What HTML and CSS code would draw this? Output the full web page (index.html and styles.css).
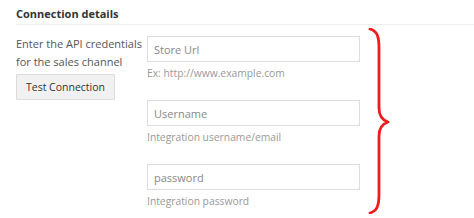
FILE: index.html
```html
<!DOCTYPE html>
<html>
  <head>
    <title>Connection details</title>
    <link rel="stylesheet" href="styles.css">
  </head>
  <body>
    <h2 class="section-title">Connection details</h2>

    <div class="section-row">
      <div class="section-intro">
        <p class="intro-text">Enter the API credentials for the sales channel</p>
        <button class="test-button">Test Connection</button>
      </div>

      <div class="fields">
        <div class="field">
          <input class="field-input" type="text" placeholder="Store Url">
          <div class="field-hint">Ex: http://www.example.com</div>
        </div>
        <div class="field">
          <input class="field-input" type="text" placeholder="Username">
          <div class="field-hint">Integration username/email</div>
        </div>
        <div class="field">
          <input class="field-input" type="password" placeholder="password">
          <div class="field-hint">Integration password</div>
        </div>
      </div>

      <svg class="brace" viewBox="0 0 24 186" xmlns="http://www.w3.org/2000/svg">
        <path
          d="M2 1C9 3 11 8 11 20V80C11 88 14 92 20 94C14 96 11 100 11 108V166C11 178 9 183 2 185"
        />
      </svg>
    </div>
  </body>
</html>
```

FILE: styles.css
```css
body {
  margin: 0;
  padding: 0 0 0 16px;
  font-family: "Open Sans", "Liberation Sans", Arial, sans-serif;
  background-color: #ffffff;
  color: #444444;
}
.section-title {
  margin: 0;
  padding: 5px 0 1px;
  font-size: 11px;
  line-height: 18px;
  font-weight: 700;
  color: #333333;
  border-bottom: 1px solid #eeeeee;
}
.section-row {
  display: flex;
  align-items: flex-start;
}
.section-intro {
  width: 131px;
  padding-top: 10px;
  flex-shrink: 0;
}
.intro-text {
  margin: 0;
  font-size: 11px;
  line-height: 18px;
  color: #555555;
}
.test-button {
  margin-top: 3px;
  width: 99px;
  height: 26px;
  padding: 0;
  font-family: inherit;
  font-size: 10.5px;
  color: #333333;
  background-color: #f1f1f1;
  border: 1px solid #dddddd;
  border-radius: 1px;
}
.fields {
  width: 213px;
  padding-top: 11px;
}
.field {
  margin-bottom: 18px;
}
.field-input {
  display: block;
  box-sizing: border-box;
  width: 100%;
  height: 26px;
  margin: 0;
  padding: 0 6px;
  font-family: inherit;
  font-size: 11px;
  color: #444444;
  background-color: #ffffff;
  border: 1px solid #dddddd;
  border-radius: 0;
  outline: none;
}
.field-input::placeholder {
  color: #888888;
}
.field-hint {
  margin-top: 2px;
  font-size: 10.3px;
  line-height: 18px;
  color: #999999;
}
.brace {
  width: 24px;
  height: 186px;
  margin: 3px 0 0 8px;
  flex-shrink: 0;
  fill: none;
  stroke: #ee1c1c;
  stroke-width: 2.8;
  stroke-linecap: round;
  stroke-linejoin: round;
}
```
